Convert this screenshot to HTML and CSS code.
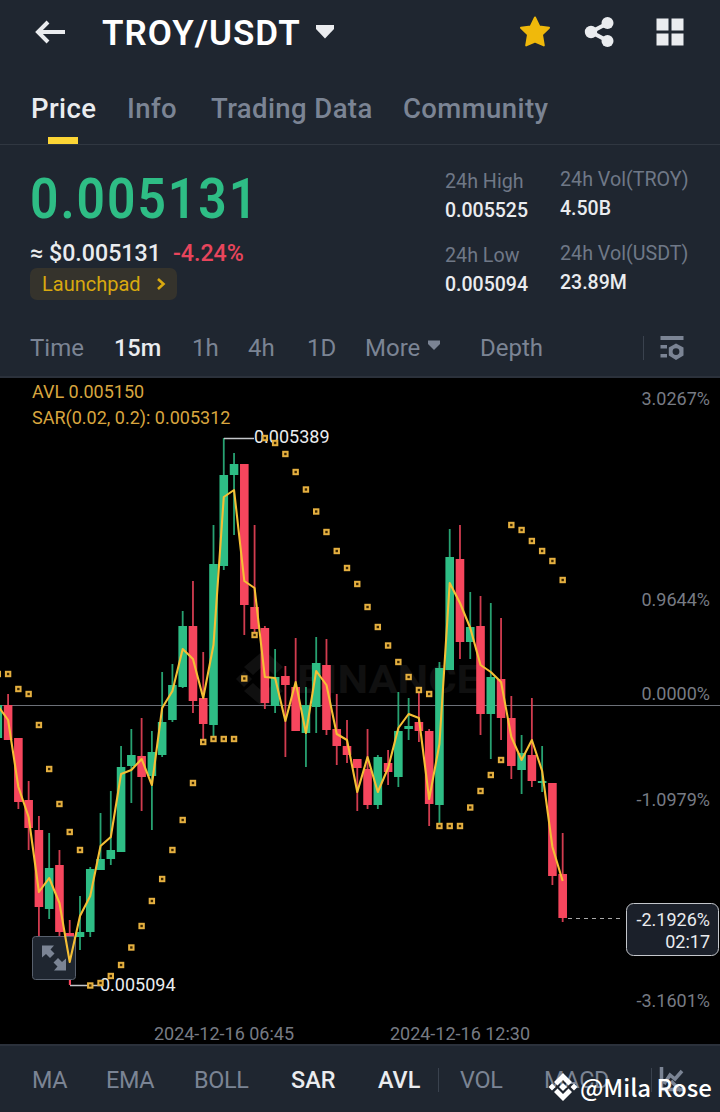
FILE: index.html
```
<!DOCTYPE html>
<html lang="en">
<head>
    <meta charset="UTF-8">
    <meta name="viewport" content="width=device-width, initial-scale=1.0">
    <title>TROY/USDT</title>
    <link rel="stylesheet" href="styles.css">
</head>
<body>
    <header class="header">
        <svg class="back" width="32" height="26" viewBox="0 0 32 26">
            <path d="M31 13H4M14 3L4 13L14 23" fill="none" stroke="#eaecef" stroke-width="4"/>
        </svg>
        <h1 class="pair">TROY/USDT</h1>
        <svg class="pair-caret" width="20" height="16" viewBox="0 0 20 16">
            <path d="M1 1H19V5L10 14.5L1 5Z" fill="#eaecef"/>
        </svg>
        <div class="header-actions">
            <svg width="32" height="32" viewBox="0 0 32 32">
                <path d="M16 1.5L20.3 10.4L30 11.7L23 18.6L24.8 29.4L16 25.6L7.2 29.4L9 18.6L2 11.7L11.7 10.4Z" fill="#f0b90b" stroke="#f0b90b" stroke-width="2" stroke-linejoin="round"/>
            </svg>
            <svg width="30" height="32" viewBox="0 0 30 32">
                <path d="M24 7L7 16L24 25" fill="none" stroke="#eaecef" stroke-width="4"/>
                <circle cx="23.5" cy="7" r="6" fill="#eaecef"/>
                <circle cx="7" cy="16" r="6.2" fill="#eaecef"/>
                <circle cx="23.5" cy="25" r="6" fill="#eaecef"/>
            </svg>
            <svg width="28" height="28" viewBox="0 0 28 28">
                <path d="M0.5 0.5H12.5V12.5H0.5ZM15.5 0.5H27.5V12.5H15.5ZM0.5 15.5H12.5V27.5H0.5ZM15.5 15.5H27.5V27.5H15.5Z" fill="#eaecef"/>
            </svg>
        </div>
    </header>

    <nav class="tabs">
        <a class="tab active">Price</a>
        <a class="tab tab-info">Info</a>
        <a class="tab tab-data">Trading Data</a>
        <a class="tab tab-community">Community</a>
    </nav>

    <section class="summary">
        <div class="quote">
            <div class="price">0.005131</div>
            <div class="quote-sub">
                <span class="fiat">≈ $0.005131</span>
                <span class="change">-4.24%</span>
            </div>
            <div class="badge">
                <span>Launchpad</span>
                <svg width="10" height="14" viewBox="0 0 10 14">
                    <path d="M2 2L7.5 7L2 12" fill="none" stroke="#d9a90f" stroke-width="2.6"/>
                </svg>
            </div>
        </div>
        <dl class="stats">
            <dt>24h High</dt>
            <dd>0.005525</dd>
            <dt>24h Low</dt>
            <dd>0.005094</dd>
        </dl>
        <dl class="stats stats-volume">
            <dt>24h Vol(TROY)</dt>
            <dd>4.50B</dd>
            <dt>24h Vol(USDT)</dt>
            <dd>23.89M</dd>
        </dl>
    </section>

    <nav class="intervals">
        <span class="interval-time">Time</span>
        <span class="active">15m</span>
        <span>1h</span>
        <span>4h</span>
        <span>1D</span>
        <span class="more">More
            <svg width="14" height="11" viewBox="0 0 14 11">
                <path d="M1 0.5H13V4L7 10L1 4Z" fill="#7b8494"/>
            </svg>
        </span>
        <span>Depth</span>
        <i class="divider"></i>
        <svg width="26" height="26" viewBox="0 0 26 26">
            <path d="M1.500 1H24.500V5H1.500ZM1.500 10H8V13.500H1.500ZM1.500 19H8V22.500H1.500Z" fill="#7b8494"/>
            <path fill-rule="evenodd" d="M17 8.500L24.500 12.500V20.500L17 25L9.800 20.500V12.500ZM17 13.200A3.400 3.400 0 1 0 17 20A3.400 3.400 0 1 0 17 13.200Z" fill="#7b8494"/>
        </svg>
    </nav>

    <main class="chart">
        <svg id="chart" width="720" height="666" viewBox="0 378 720 666">
            <g class="brand">
                <path d="M236 679L244 671L252 679L244 687ZM244 667L264 650L283 667L274 675L264 665L253 675ZM244 691L253 683L264 693L274 683L283 691L264 708Z"/>
                <text x="297" y="693" textLength="184" lengthAdjust="spacingAndGlyphs">BINANCE</text>
            </g>
            <path class="baseline" d="M0 705.5H720"/>
            <g id="candles"></g>
            <g class="expand">
                <rect x="32.5" y="936.5" width="43" height="43" rx="3"/>
                <path d="M42 945.500H54L50.500 949.500L54.500 953.500L50 958L46 954L42 957.500ZM66 970.500H54L57.500 966.500L53.500 962.500L58 958L62 962L66 958.500Z"/>
            </g>
            <path class="marker" d="M224 438.500H254M70 985.500H101"/>
            <path class="down" d="M69 980H71V985H69Z"/>
            <text class="extreme" x="254" y="443">0.005389</text>
            <text class="extreme" x="100" y="991">0.005094</text>
            <g id="overlay"></g>
            <path class="last-price" d="M568 918.500H621"/>
            <g class="legend">
                <text x="32" y="398">AVL 0.005150</text>
                <text x="32" y="424">SAR(0.02, 0.2): 0.005312</text>
            </g>
            <g class="axis">
                <text x="710" y="405">3.0267%</text>
                <text x="710" y="606">0.9644%</text>
                <text x="710" y="700">0.0000%</text>
                <text x="710" y="806">-1.0979%</text>
                <text x="710" y="1007">-3.1601%</text>
            </g>
            <g class="axis axis-time">
                <text x="224" y="1040">2024-12-16 06:45</text>
                <text x="460" y="1040">2024-12-16 12:30</text>
            </g>
            <g class="current">
                <rect x="626.500" y="903.500" width="92" height="52" rx="7"/>
                <text x="710" y="926">-2.1926%</text>
                <text x="710" y="948">02:17</text>
            </g>
        </svg>
    </main>

    <footer class="indicators">
        <span>MA</span>
        <span>EMA</span>
        <span>BOLL</span>
        <span class="active">SAR</span>
        <span class="active">AVL</span>
        <i class="divider"></i>
        <span>VOL</span>
        <span>MACD</span>
        <i class="divider"></i>
        <svg width="26" height="26" viewBox="0 0 26 26">
            <path d="M2.500 0V22.500H24M5 17L11 8L16 12L23 4M12 14L22 24" fill="none" stroke="#7b8494" stroke-width="3.500"/>
        </svg>
    </footer>

    <div class="credit">
        <svg width="30" height="30" viewBox="0 0 30 30">
            <path d="M6 10L15 1L24 10L20.500 13.500L15 8L9.500 13.500ZM6 20L9.500 16.500L15 22L20.500 16.500L24 20L15 29ZM0.500 15L4 11.500L7.500 15L4 18.500ZM11 15L15 11L19 15L15 19ZM22.500 15L26 11.500L29.500 15L26 18.500Z" fill="#fff"/>
        </svg>
        <span>@Mila Rose</span>
    </div>

    <script src="chart.js"></script>
</body>
</html>
```
FILE: styles.css
```
* {
    box-sizing: border-box;
}
body {
    margin: 0;
    width: 720px;
    height: 1112px;
    overflow: hidden;
    position: relative;
    background-color: #1f2630;
    color: #eaecef;
    font-family: Roboto, "Liberation Sans", sans-serif;
}
svg {
    display: block;
    flex: none;
}
.header {
    display: flex;
    align-items: center;
    height: 66px;
    padding: 0 36px 2px 34px;
}
.pair {
    width: 197px;
    margin: 4px 0 0 36px;
    font-size: 35px;
    font-weight: 600;
    letter-spacing: 1px;
    line-height: 40px;
    color: #fff;
    white-space: nowrap;
}
.pair-caret {
    margin-left: 16px;
}
.header-actions {
    display: flex;
    align-items: center;
    margin-left: auto;
}
.header-actions svg + svg {
    margin-left: 33px;
}
.header-actions svg:last-child {
    margin-left: 42px;
}
.tabs {
    display: grid;
    grid-template-columns: 96px 84px 192px 200px;
    height: 79px;
    padding: 24px 0 0 31px;
    border-bottom: 1px solid #303741;
    font-size: 27.5px;
    font-weight: 500;
    letter-spacing: 0.4px;
    line-height: 38px;
    color: #7b8494;
    white-space: nowrap;
}
.tabs .active {
    position: relative;
    color: #eaecef;
}
.tabs .active::after {
    content: "";
    position: absolute;
    left: 17px;
    top: 47px;
    width: 30px;
    height: 7px;
    background-color: #fcd535;
}
.summary {
    display: grid;
    grid-template-columns: 415px 115px 160px;
    height: 175px;
    padding-left: 30px;
}
.price {
    height: 60px;
    margin-top: 24px;
    font-size: 56px;
    font-weight: 600;
    line-height: 60px;
    letter-spacing: 2.2px;
    color: #2ebd85;
    transform: scaleX(0.89);
    transform-origin: left;
}
.quote-sub {
    display: flex;
    gap: 12px;
    height: 32px;
    margin-top: 8px;
    font-size: 23.2px;
    font-weight: 500;
    line-height: 32px;
    white-space: nowrap;
}
.change {
    color: #e8455c;
}
.badge {
    display: flex;
    align-items: center;
    justify-content: space-between;
    width: 147px;
    height: 32px;
    margin-top: -1px;
    padding: 0 11px 0 12px;
    border-radius: 7px;
    background-color: #35332c;
    font-size: 20px;
    color: #d9a90f;
}
.stats {
    margin: 22px 0 0;
    font-size: 19.7px;
    white-space: nowrap;
}
.stats dt {
    height: 29px;
    line-height: 29px;
    color: #6f7887;
}
.stats dd {
    height: 29px;
    margin: 0 0 16px;
    line-height: 30px;
    font-size: 19.5px;
    font-weight: 500;
}
.stats-volume {
    margin-top: 20px;
}
.intervals {
    display: grid;
    grid-template-columns: 84px 78px 56px 59px 58px 115px 163px 16px 26px;
    align-items: center;
    height: 58px;
    padding: 0 0 1px 30px;
    border-bottom: 2px solid #2b313b;
    font-size: 24px;
    color: #7b8494;
    white-space: nowrap;
}
.intervals .active,
.indicators .active {
    font-weight: 500;
    color: #eaecef;
}
.intervals .active {
    font-size: 23.5px;
}
.more {
    display: flex;
    align-items: center;
    gap: 7px;
}
.more svg {
    margin-bottom: 4px;
}
.divider {
    width: 1px;
    height: 24px;
    background-color: #3a424e;
}
.chart {
    height: 666px;
    background-color: #000;
}
.brand {
    fill: #101010;
    font: 700 38px Roboto, sans-serif;
}
.baseline {
    stroke: #6c7078;
}
.up {
    fill: #2ebd85;
}
.down {
    fill: #f6465d;
}
.expand rect {
    fill: #1f2630;
    stroke: #58606d;
}
.expand path {
    fill: #7b8494;
}
.marker {
    fill: none;
    stroke: #c4c6ca;
    stroke-width: 1.3;
}
.extreme {
    font-size: 18px;
    fill: #eaecef;
}
.avl {
    fill: none;
    stroke: #f5bf35;
    stroke-width: 2.1;
    stroke-linejoin: round;
}
.sar {
    fill: #3a2500;
    stroke: #e5b040;
    stroke-width: 2;
}
.last-price {
    stroke: #a8a8a8;
    stroke-width: 1.2;
    stroke-dasharray: 4 4;
}
.legend {
    font-size: 18px;
    fill: #d8a63f;
}
.axis {
    font-size: 18px;
    fill: #777b84;
    text-anchor: end;
}
.axis-time {
    text-anchor: middle;
}
.current {
    font-size: 18px;
    fill: #eaecef;
    text-anchor: end;
}
.current rect {
    fill: #1b202a;
    stroke: #c4c7cc;
}
.indicators {
    display: grid;
    grid-template-columns: 74px 88px 97px 87px 60px 22px 84px 107px 8px 26px;
    align-items: center;
    height: 68px;
    padding: 2px 0 0 32px;
    border-top: 2px solid #2b313b;
    font-size: 23.4px;
    letter-spacing: -0.3px;
    color: #7b8494;
    white-space: nowrap;
}
.indicators .active {
    letter-spacing: 0;
}
.credit {
    position: absolute;
    left: 548px;
    top: 1069px;
    display: flex;
    align-items: center;
    gap: 2px;
    font-family: "Noto Sans CJK SC", "Noto Sans", sans-serif;
    font-size: 24px;
    font-weight: 500;
    line-height: 36px;
    color: #fff;
    white-space: nowrap;
}
```
FILE: chart.js
```
const FIRST_X = 8.1;
const STEP = 10.27;

// [direction, high, body top, body bottom, low]
const candles = [
    ['d', 694, 705, 740, 740], ['d', 738, 738, 802, 809], ['d', 781, 800, 828, 850],
    ['d', 816, 830, 907, 940], ['u', 833, 868, 909, 919], ['d', 850, 865, 932, 940],
    ['d', 920, 933, 938, 985], ['u', 896, 932, 937, 950], ['u', 867, 869, 932, 937],
    ['u', 813, 859, 870, 870], ['u', 791, 850, 859, 865], ['u', 746, 767, 852, 852],
    ['u', 729, 755, 766, 803], ['d', 718, 756, 777, 811], ['u', 731, 752, 776, 830],
    ['u', 672, 722, 755, 757], ['u', 664, 685, 720, 722], ['u', 611, 626, 687, 688],
    ['d', 581, 626, 701, 713], ['d', 652, 698, 724, 742], ['u', 525, 564, 725, 737],
    ['u', 438, 475, 566, 570], ['u', 453, 464, 475, 535], ['d', 464, 464, 605, 635],
    ['d', 525, 607, 629, 633], ['d', 626, 628, 703, 709], ['u', 649, 677, 706, 713],
    ['d', 666, 676, 685, 757], ['d', 638, 687, 731, 731], ['u', 687, 705, 733, 767],
    ['u', 637, 663, 707, 733], ['d', 639, 665, 730, 735], ['d', 694, 729, 746, 765],
    ['d', 720, 746, 755, 763], ['d', 759, 759, 768, 811], ['d', 729, 769, 805, 809],
    ['u', 755, 757, 805, 809], ['d', 750, 763, 772, 785], ['u', 692, 731, 777, 787],
    ['u', 698, 726, 729, 740], ['d', 690, 722, 731, 742], ['d', 729, 731, 804, 826],
    ['u', 662, 668, 805, 826], ['u', 529, 557, 670, 670], ['d', 525, 559, 642, 659],
    ['u', 592, 627, 642, 659], ['d', 596, 626, 714, 735], ['u', 603, 677, 714, 759],
    ['d', 618, 679, 718, 740], ['d', 696, 718, 766, 779], ['u', 735, 753, 770, 794],
    ['d', 698, 755, 781, 787], ['u', 746, 781, 783, 792], ['d', 783, 783, 876, 885],
    ['d', 833, 874, 918, 922]
];

const avl = [
    720, 787, 817, 892, 878, 903, 962, 916, 896, 846, 837, 774, 770, 759, 785, 708, 691, 649,
    659, 698, 645, 497, 490, 581, 588, 677, 678, 721, 682, 733, 671, 685, 734, 740, 792, 757,
    792, 768, 728, 714, 718, 799, 744, 583, 603, 628, 665, 672, 682, 737, 760, 740, 771, 847, 881
];

const sar = [
    674, 689, 694, 725, 769, 804, 832, 850, 985.5, 983, 976, 965, 947.5, 926, 901, 879, 850, 820,
    783, 742, 739, 739, 739, 678.5, 635, 438, 443, 454, 472, 489.5, 511.5, 532, 551, 568, 584, 607,
    627, 645.5, 662, 677, 690, 694, 826, 826, 826, 807.5, 791, 775, 760, 525, 530, 541, 551, 561, 580
];

const xAt = i => FIRST_X + i * STEP;

function drawCandle([dir, high, top, bottom, low], i) {
    const x = xAt(i);
    return `<g class="${dir === 'u' ? 'up' : 'down'}">
        <rect x="${x - 0.9}" y="${high}" width="1.8" height="${low - high}" opacity="0.85"/>
        <rect x="${x - 4.3}" y="${top}" width="8.6" height="${bottom - top}"/>
    </g>`;
}

function drawSar(y, i) {
    return `<rect class="sar" x="${xAt(i) - 2.2}" y="${y - 2.2}" width="4.4" height="4.4"/>`;
}

// the first bar is cut off by the left edge
document.getElementById('candles').innerHTML =
    drawCandle(['u', 705, 705, 738, 738], -1) + candles.map(drawCandle).join('');

const points = avl.map((y, i) => `${xAt(i)},${y}`).join(' ');
document.getElementById('overlay').innerHTML =
    `<polyline class="avl" points="-2,706 ${points}"/>` +
    drawSar(674, -1) + sar.map(drawSar).join('');
```
